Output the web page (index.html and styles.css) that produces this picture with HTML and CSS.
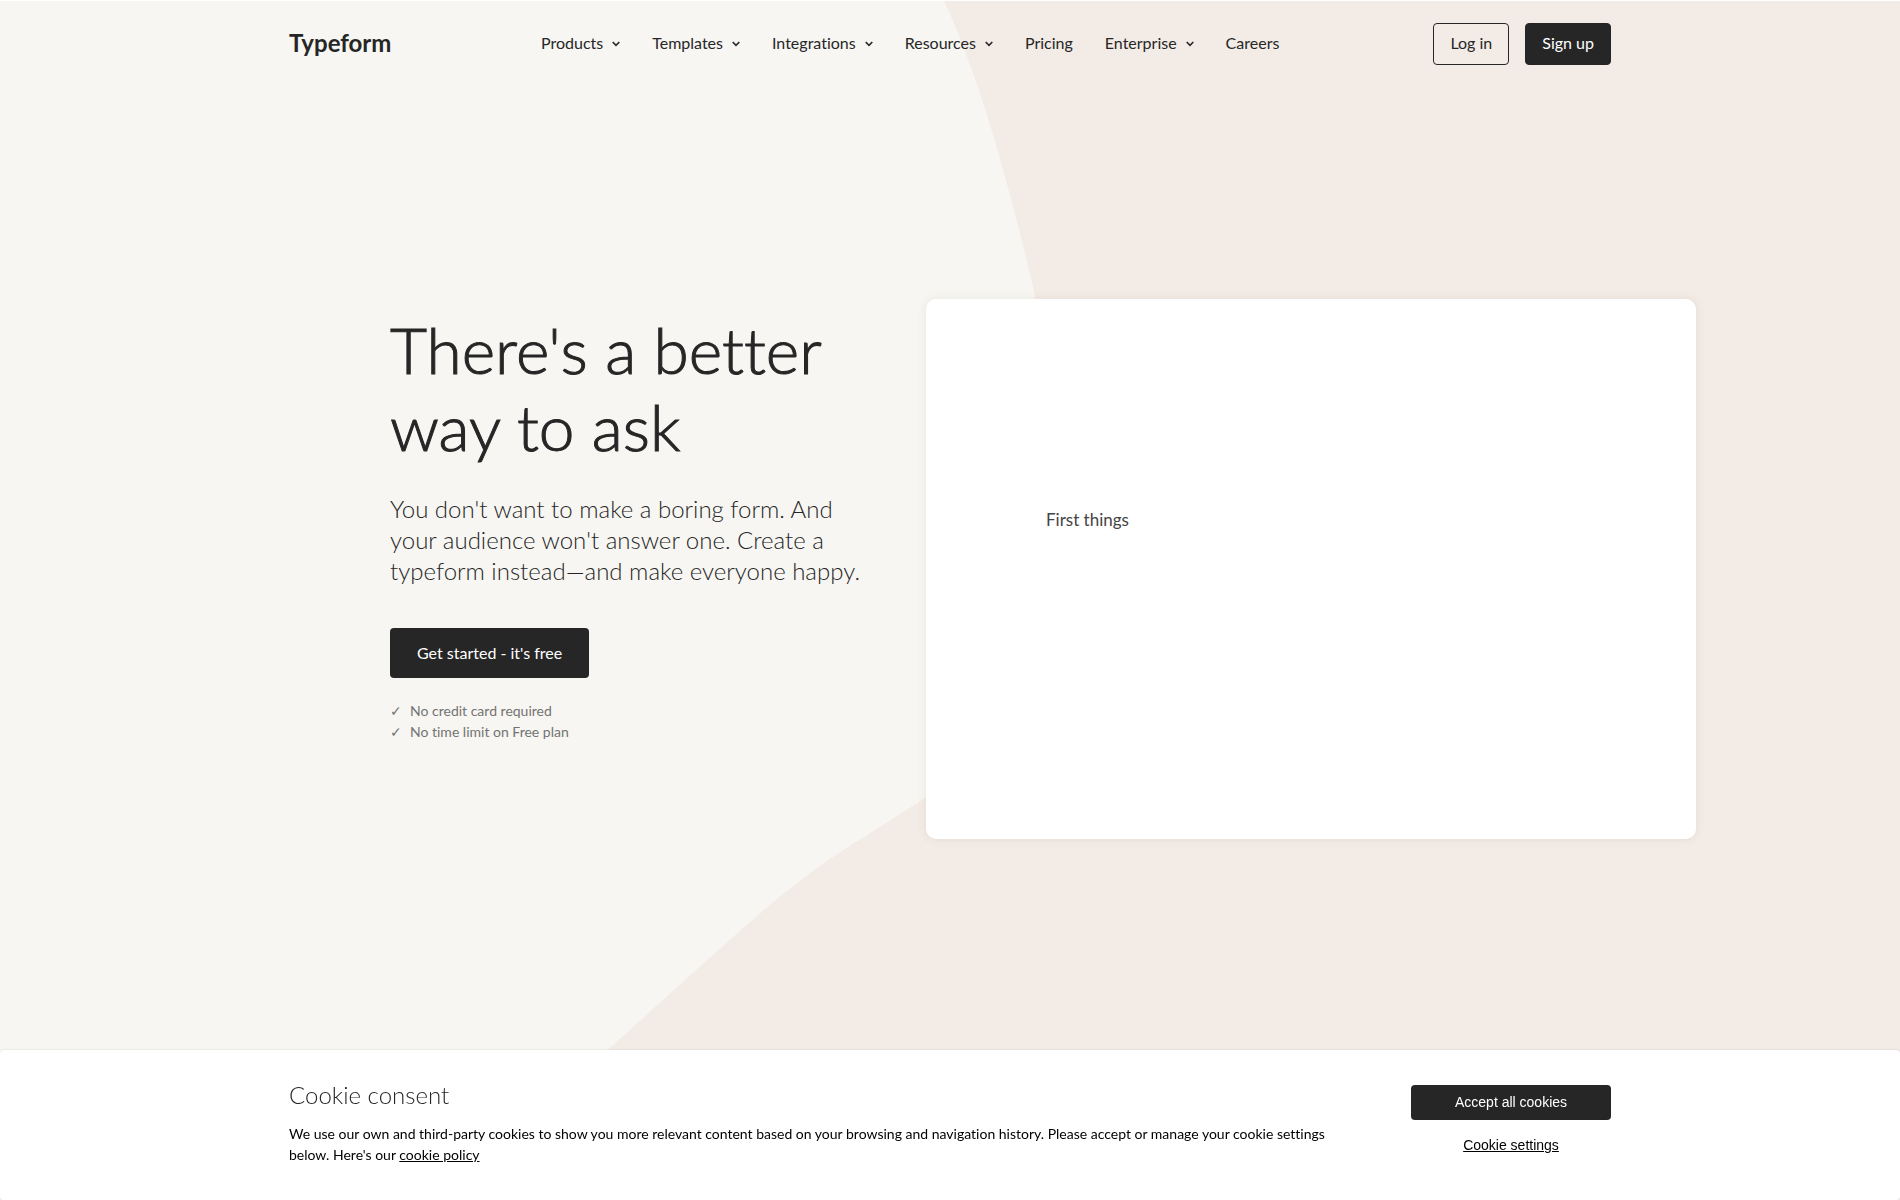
FILE: index.html
```html
<!DOCTYPE html>
<html lang="en">
<head>
<meta charset="utf-8">
<meta name="viewport" content="width=device-width, initial-scale=1">
<title>Typeform</title>
<link rel="stylesheet" href="styles.css">
</head>
<body>
<div class="page">
  <svg class="backdrop" viewBox="0 0 1900 1200" preserveAspectRatio="xMidYMid slice" aria-hidden="true">
    <path d="M944 0 C986 92 1014 206 1036 299 C1080 500 1060 720 926 797 L860 839 C800 876 760 912 700 966 L606 1051 L440 1200 L1900 1200 L1900 0 Z"/>
  </svg>
  <header class="header">
    <a class="logo" href="#">Typeform</a>
    <nav class="nav">
      <button class="nav-item" type="button">Products <svg class="chevron" viewBox="0 0 8 6"><path d="M.7 1l3.3 3.3L7.3 1"/></svg></button>
      <button class="nav-item" type="button">Templates <svg class="chevron" viewBox="0 0 8 6"><path d="M.7 1l3.3 3.3L7.3 1"/></svg></button>
      <button class="nav-item" type="button">Integrations <svg class="chevron" viewBox="0 0 8 6"><path d="M.7 1l3.3 3.3L7.3 1"/></svg></button>
      <button class="nav-item" type="button">Resources <svg class="chevron" viewBox="0 0 8 6"><path d="M.7 1l3.3 3.3L7.3 1"/></svg></button>
      <a class="nav-item" href="#">Pricing</a>
      <button class="nav-item" type="button">Enterprise <svg class="chevron" viewBox="0 0 8 6"><path d="M.7 1l3.3 3.3L7.3 1"/></svg></button>
      <a class="nav-item" href="#">Careers</a>
    </nav>
    <div class="account">
      <a class="account-link" href="#">Log in</a>
      <a class="account-link account-link-dark" href="#">Sign up</a>
    </div>
  </header>
  <main class="hero">
    <div class="intro">
      <h1 class="title">There's a better<br>way to ask</h1>
      <p class="lead">You don't want to make a boring form. And<br>your audience won't answer one. Create a<br>typeform instead—and make everyone happy.</p>
      <a class="cta" href="#">Get started - it's free</a>
      <ul class="perks">
        <li class="perk"><span class="tick">✓</span>No credit card required</li>
        <li class="perk"><span class="tick">✓</span>No time limit on Free plan</li>
      </ul>
    </div>
    <div class="demo"><p class="demo-text">First things</p></div>
  </main>
</div>
<section class="cookies" aria-labelledby="cookies-title">
  <div class="cookies-inner">
    <div class="cookies-copy">
      <h2 class="cookies-title" id="cookies-title">Cookie consent</h2>
      <p class="cookies-text">We use our own and third-party cookies to show you more relevant content based on your browsing and navigation history. Please accept or manage your cookie settings below. Here's our <a class="cookies-link" href="#">cookie policy</a></p>
    </div>
    <div class="cookies-actions">
      <button class="accept" type="button">Accept all cookies</button>
      <button class="settings" type="button">Cookie settings</button>
    </div>
  </div>
</section>
</body>
</html>
```
FILE: styles.css
```css
* { box-sizing: border-box; }

body {
  margin: 0;
  color: #262627;
  font-family: Lato, "Liberation Sans", sans-serif;
  font-size: 16px;
  font-variant-ligatures: none;
}

h1, h2, p, ul { margin: 0; padding: 0; font-weight: 400; }
ul { list-style: none; }
a { color: inherit; text-decoration: none; }
button { border: 0; padding: 0; background: none; color: inherit; font: inherit; cursor: pointer; }

.page {
  position: relative;
  display: flex;
  flex-direction: column;
  min-height: 100vh;
  border-top: 1px solid #fff;
  background: #f7f6f2;
}

.backdrop {
  position: absolute;
  inset: 0;
  width: 100%;
  height: 100%;
  fill: #f3ebe5;
}

.header {
  position: relative;
  display: grid;
  grid-template-columns: 252px 1fr auto;
  align-items: center;
  width: calc(100% - 48px);
  max-width: 1322px;
  height: 86px;
  margin: 0 auto;
}

.logo { padding-bottom: 2px; font-size: 24px; font-weight: 700; line-height: 32px; }

.nav { display: flex; gap: 32px; padding-bottom: 2px; }

.nav-item { display: flex; align-items: center; gap: 9px; line-height: 24px; }

.chevron {
  width: 8px;
  height: 6px;
  margin-top: 2px;
  fill: none;
  stroke: #262627;
  stroke-width: 1.6;
}

.account { display: flex; gap: 16px; }

.account-link {
  padding: 7px 16px 9px;
  border: 1px solid #262627;
  border-radius: 4px;
  line-height: 24px;
}

.account-link-dark { background: #262627; color: #fff; }

.hero {
  position: relative;
  display: grid;
  grid-template-columns: 1fr 770px;
  gap: 48px;
  width: calc(100% - 48px);
  max-width: 1492px;
  margin: 212px auto 0;
  padding-left: 186px;
}

.intro { padding-top: 12px; }

.title {
  font-size: 64px;
  font-weight: 300;
  line-height: 77px;
  -webkit-text-stroke: 1px #262627;
}

.lead { margin-top: 28px; font-size: 24px; font-weight: 300; line-height: 31px; white-space: nowrap; }

.cta {
  display: inline-block;
  margin-top: 42px;
  padding: 13px 27px;
  border-radius: 4px;
  background: #262627;
  color: #fff;
  line-height: 24px;
}

.perks { margin-top: 22px; color: #737373; font-size: 14px; line-height: 21px; }
.perk { display: flex; }
.tick { width: 20px; }

.demo {
  height: 540px;
  padding: 207px 120px;
  border-radius: 10px;
  background: #fff;
  box-shadow: 0 0 10px rgba(90, 90, 50, 0.1);
}

.demo-text { color: #444; font-size: 17px; line-height: 28px; }

.cookies {
  position: fixed;
  right: 0;
  bottom: 0;
  left: 0;
  padding: 32px 24px 35px;
  border-radius: 4px;
  background: #fff;
  box-shadow: 0 0 2px rgba(0, 0, 0, 0.15);
}

.cookies-inner {
  display: flex;
  justify-content: space-between;
  gap: 64px;
  max-width: 1322px;
  margin: 0 auto;
}

.cookies-copy { max-width: 1058px; color: #000; }
.cookies-title { color: #262627; font-size: 24px; font-weight: 300; line-height: 25px; }
.cookies-text { margin-top: 16px; font-size: 14px; line-height: 21px; }
.cookies-link { text-decoration: underline; }

.cookies-actions {
  display: flex;
  flex-direction: column;
  flex: 0 0 200px;
  gap: 16px;
  padding-top: 3px;
  font-family: "Liberation Sans", Arial, sans-serif;
  font-size: 14px;
  line-height: 19px;
}

.accept { padding: 8px; border-radius: 4px; background: #262627; color: #fff; }
.settings { color: #000; text-decoration: underline; }
```
